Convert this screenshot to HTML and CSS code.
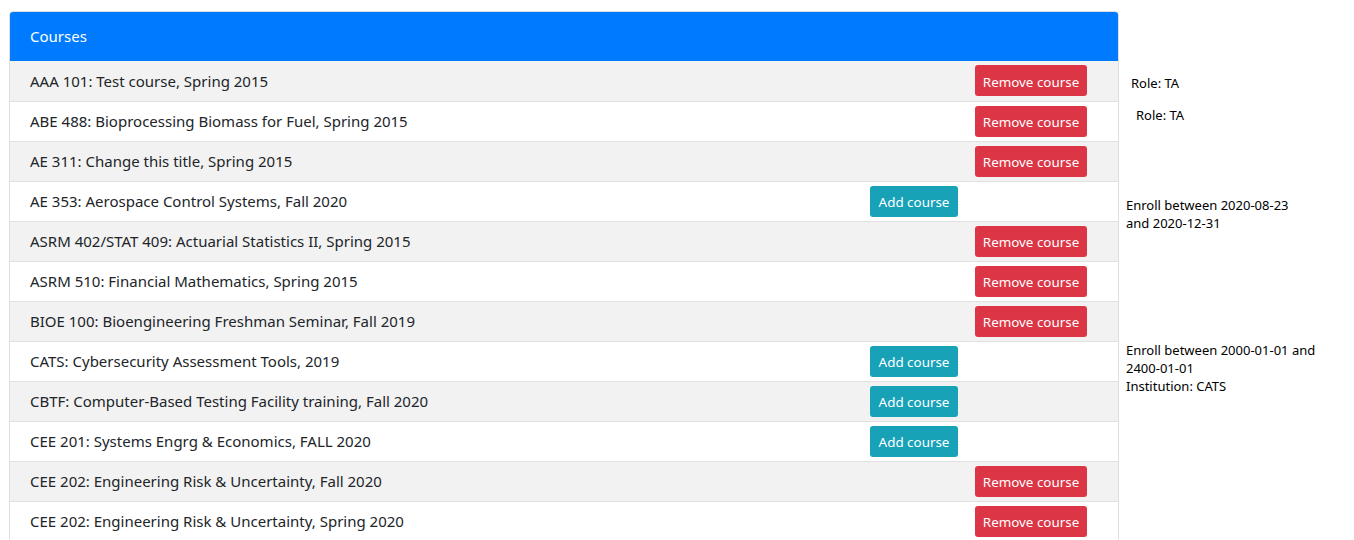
FILE: index.html
```html
<!DOCTYPE html>
<html>
<head>
<meta charset="utf-8">
<link rel="stylesheet" href="styles.css">
</head>
<body>
<div class="page">
  <div class="card">
    <div class="card-header">Courses</div>
    <div class="row"><span class="name">AAA 101: Test course, Spring 2015</span><span class="slot-add"></span><span class="slot-rm"><button class="btn btn-danger">Remove course</button></span></div>
    <div class="row"><span class="name">ABE 488: Bioprocessing Biomass for Fuel, Spring 2015</span><span class="slot-add"></span><span class="slot-rm"><button class="btn btn-danger">Remove course</button></span></div>
    <div class="row"><span class="name">AE 311: Change this title, Spring 2015</span><span class="slot-add"></span><span class="slot-rm"><button class="btn btn-danger">Remove course</button></span></div>
    <div class="row"><span class="name">AE 353: Aerospace Control Systems, Fall 2020</span><span class="slot-add"><button class="btn btn-info">Add course</button></span><span class="slot-rm"></span></div>
    <div class="row"><span class="name">ASRM 402/STAT 409: Actuarial Statistics II, Spring 2015</span><span class="slot-add"></span><span class="slot-rm"><button class="btn btn-danger">Remove course</button></span></div>
    <div class="row"><span class="name">ASRM 510: Financial Mathematics, Spring 2015</span><span class="slot-add"></span><span class="slot-rm"><button class="btn btn-danger">Remove course</button></span></div>
    <div class="row"><span class="name">BIOE 100: Bioengineering Freshman Seminar, Fall 2019</span><span class="slot-add"></span><span class="slot-rm"><button class="btn btn-danger">Remove course</button></span></div>
    <div class="row"><span class="name">CATS: Cybersecurity Assessment Tools, 2019</span><span class="slot-add"><button class="btn btn-info">Add course</button></span><span class="slot-rm"></span></div>
    <div class="row"><span class="name">CBTF: Computer-Based Testing Facility training, Fall 2020</span><span class="slot-add"><button class="btn btn-info">Add course</button></span><span class="slot-rm"></span></div>
    <div class="row"><span class="name">CEE 201: Systems Engrg &amp; Economics, FALL 2020</span><span class="slot-add"><button class="btn btn-info">Add course</button></span><span class="slot-rm"></span></div>
    <div class="row"><span class="name">CEE 202: Engineering Risk &amp; Uncertainty, Fall 2020</span><span class="slot-add"></span><span class="slot-rm"><button class="btn btn-danger">Remove course</button></span></div>
    <div class="row"><span class="name">CEE 202: Engineering Risk &amp; Uncertainty, Spring 2020</span><span class="slot-add"></span><span class="slot-rm"><button class="btn btn-danger">Remove course</button></span></div>
  </div>
  <div class="notes">
    <div class="note note-1">Role: TA</div>
    <div class="note note-2">Role: TA</div>
    <div class="note note-3">Enroll between 2020-08-23<br>and 2020-12-31</div>
    <div class="note note-4">Enroll between 2000-01-01 and<br>2400-01-01<br>Institution: CATS</div>
  </div>
</div>
</body>
</html>
```
FILE: styles.css
```css
html, body {
  margin: 0;
  padding: 0;
  background: #fff;
}
body {
  font-family: "Noto Sans", "Open Sans", sans-serif;
  color: #212529;
}
.page {
  display: flex;
  align-items: flex-start;
  padding: 11px 0 0 9px;
}
.card {
  width: 1110px;
  box-sizing: border-box;
  border: 1px solid rgba(0,0,0,0.125);
  border-radius: 4px;
  overflow: hidden;
  flex: none;
}
.card-header {
  background: #007bff;
  color: #fff;
  font-size: 15px;
  line-height: 24px;
  padding: 12px 20px 13px 20px;
}
.row {
  display: flex;
  align-items: center;
  height: 40px;
  box-sizing: border-box;
  border-top: 1px solid #dee2e6;
  padding: 0 31px 1px 20px;
  font-size: 15px;
  background: #fff;
}
.row:nth-child(even) {
  background: #f2f2f2;
}
.card-header + .row {
  border-top: none;
}
.name {
  flex: 1;
  white-space: nowrap;
}
.slot-add {
  width: 88px;
  margin-right: 17px;
  display: flex;
}
.slot-rm {
  width: 112px;
  display: flex;
}
.btn {
  font-family: "Noto Sans", "Open Sans", sans-serif;
  font-size: 13.4px;
  line-height: 20px;
  height: 31px;
  border: none;
  border-radius: 3px;
  color: #fff;
  padding: 2px 0 0 0;
  cursor: pointer;
}
.btn-danger {
  background: #dc3545;
  width: 112px;
}
.btn-info {
  background: #17a2b8;
  width: 88px;
}
.notes {
  display: flex;
  flex-direction: column;
  font-family: "Noto Sans", "Open Sans", sans-serif;
  font-size: 13px;
  line-height: 18px;
  color: #000;
}
.note-1 { margin: 63px 0 0 12px; }
.note-2 { margin: 14px 0 0 17px; }
.note-3 { margin: 72px 0 0 7px; }
.note-4 { margin: 109px 0 0 7px; }
```
